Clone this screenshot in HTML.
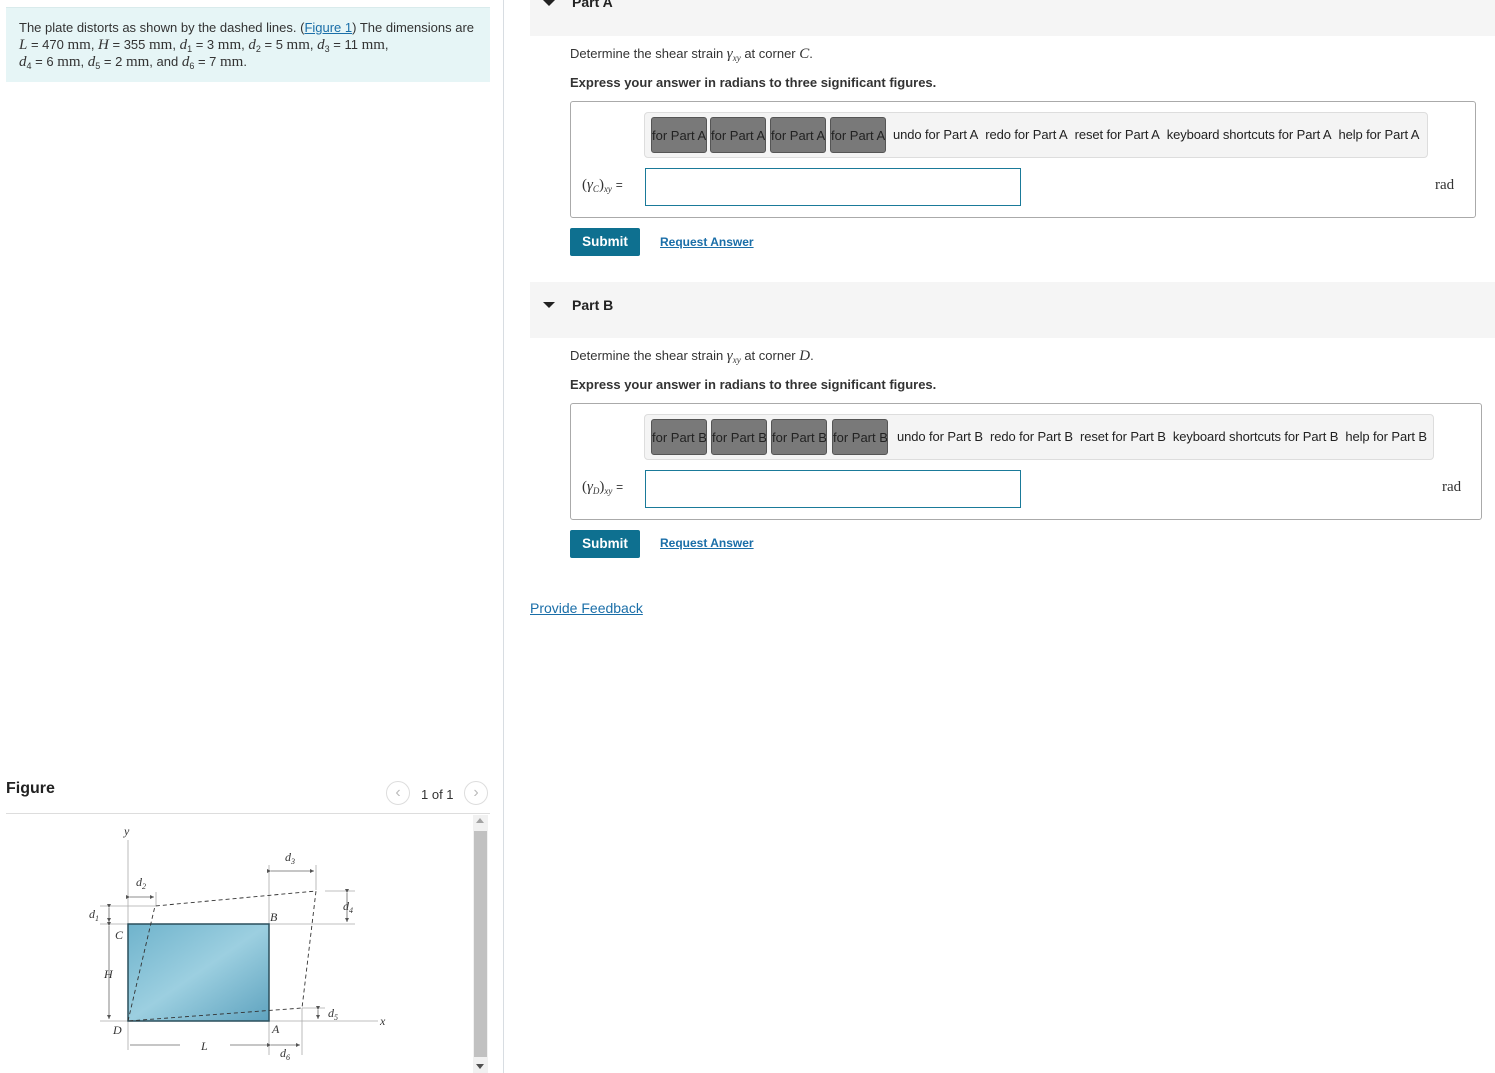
<!DOCTYPE html>
<html><head><meta charset="utf-8"><style>
*{margin:0;padding:0;box-sizing:border-box}
body{width:1495px;height:1073px;position:relative;background:#fff;font-family:"Liberation Sans",Arial,sans-serif;color:#333;overflow:hidden;font-size:13px}
.a{position:absolute}
.m{font-family:"Liberation Serif",serif;font-style:italic}
.mr{font-family:"Liberation Serif",serif}
.s{font-size:9px;position:relative;top:3px;line-height:0}
.btn{position:absolute;width:56px;height:36px;background:#797979;border:1px solid #555;border-radius:3px;color:#222;font-size:13px;overflow:hidden;white-space:nowrap}
.btn span{position:absolute;left:0;top:10px}
.tb{position:absolute;background:#f4f4f4;border:1px solid #ddd;border-radius:4px}
.lbl{position:absolute;font-size:13px;color:#222;white-space:nowrap;letter-spacing:-0.1px}
.sub{position:absolute;width:70px;height:28px;background:#0e7090;color:#fff;font-weight:bold;font-size:13.5px;text-align:center;line-height:28px;border-radius:2px}
.req{position:absolute;color:#1a6ea8;text-decoration:underline;font-size:12px;font-weight:bold}
.ln{white-space:nowrap;height:17px;line-height:17px}
</style></head><body>
<div class="a" style="left:503px;top:0;width:1px;height:1073px;background:#d8dde2"></div>
<div class="a" style="left:6px;top:7px;width:484px;height:75px;background:#e6f5f6;border-top:1px solid #d9ebec"></div>
<div class="a" style="left:19px;top:19px;font-size:13px;color:#333">
<div class="ln">The plate distorts as shown by the dashed lines. (<span style="color:#1a6ea8;text-decoration:underline">Figure 1</span>) The dimensions are</div>
<div class="ln"><span class="m" style="font-size:15px">L</span> = 470 <span class="mr" style="font-size:15px">mm</span>, <span class="m" style="font-size:15px">H</span> = 355 <span class="mr" style="font-size:15px">mm</span>, <span class="m" style="font-size:15px">d</span><span class="s">1</span> = 3 <span class="mr" style="font-size:15px">mm</span>, <span class="m" style="font-size:15px">d</span><span class="s">2</span> = 5 <span class="mr" style="font-size:15px">mm</span>, <span class="m" style="font-size:15px">d</span><span class="s">3</span> = 11 <span class="mr" style="font-size:15px">mm</span>,</div>
<div class="ln"><span class="m" style="font-size:15px">d</span><span class="s">4</span> = 6 <span class="mr" style="font-size:15px">mm</span>, <span class="m" style="font-size:15px">d</span><span class="s">5</span> = 2 <span class="mr" style="font-size:15px">mm</span>, and <span class="m" style="font-size:15px">d</span><span class="s">6</span> = 7 <span class="mr" style="font-size:15px">mm</span>.</div>
</div>

<div class="a" style="left:6px;top:780px;font-weight:bold;font-size:16px;color:#222">Figure</div>
<div class="a" style="left:386px;top:781px;width:24px;height:24px;border:1px solid #ddd;border-radius:12px;color:#bbb;text-align:center;line-height:22px;font-size:16px">&lsaquo;</div>
<div class="a" style="left:421px;top:787px;font-size:13px">1 of 1</div>
<div class="a" style="left:464px;top:781px;width:24px;height:24px;border:1px solid #ddd;border-radius:12px;color:#bbb;text-align:center;line-height:22px;font-size:16px">&rsaquo;</div>
<div class="a" style="left:6px;top:813px;width:484px;height:1px;background:#ddd"></div>
<div class="a" style="left:473px;top:815px;width:15px;height:258px;background:#f1f1f1"></div>
<div class="a" style="left:474px;top:831px;width:13px;height:226px;background:#c1c1c1"></div>
<div class="a" style="left:476px;top:818px;width:0;height:0;border-left:4px solid transparent;border-right:4px solid transparent;border-bottom:5px solid #a3a3a3"></div>
<div class="a" style="left:476px;top:1064px;width:0;height:0;border-left:4px solid transparent;border-right:4px solid transparent;border-top:5px solid #505050"></div>

<svg class="a" style="left:0;top:815px" width="470" height="258" viewBox="0 815 470 258">
<defs><linearGradient id="g" x1="0" y1="0" x2="1" y2="1"><stop offset="0" stop-color="#6fb3cc"/><stop offset=".5" stop-color="#9ccfe0"/><stop offset="1" stop-color="#5fa3bf"/></linearGradient>
<marker id="ar" markerWidth="5" markerHeight="5" refX="5" refY="2.5" orient="auto"><path d="M0,0 L5,2.5 L0,5z" fill="#555"/></marker></defs>
<g stroke="#aaa" stroke-width="0.8" fill="none">
<line x1="128" y1="840" x2="128" y2="1050"/>
<line x1="100" y1="1021" x2="378" y2="1021"/>
<line x1="100" y1="924" x2="128" y2="924"/><line x1="100" y1="906" x2="156" y2="906"/>
<line x1="269" y1="865" x2="269" y2="924"/><line x1="316" y1="865" x2="316" y2="890"/>
<line x1="269" y1="924" x2="355" y2="924"/><line x1="325" y1="891" x2="355" y2="891"/>
<line x1="302" y1="1008" x2="325" y2="1008"/>
<line x1="269" y1="1021" x2="269" y2="1055"/><line x1="302" y1="1008" x2="302" y2="1055"/>
<line x1="156" y1="892" x2="156" y2="906"/>
</g>
<g stroke="#666" stroke-width="0.8" marker-end="url(#ar)" marker-start="url(#ar)">
<line x1="130" y1="897" x2="154" y2="897"/><line x1="271" y1="871" x2="314" y2="871"/>
<line x1="347" y1="893" x2="347" y2="922"/><line x1="109" y1="908" x2="109" y2="922"/>
<line x1="109" y1="926" x2="109" y2="1019"/><line x1="318" y1="1010" x2="318" y2="1019"/>
<line x1="271" y1="1045" x2="300" y2="1045"/>
</g>
<g stroke="#666" stroke-width="0.8">
<line x1="130" y1="1045" x2="180" y2="1045"/><line x1="230" y1="1045" x2="267" y2="1045"/>
</g>
<rect x="128" y="924" width="141" height="97" fill="url(#g)" stroke="#2a4f5c" stroke-width="1.5"/>
<g stroke="#333" stroke-width="0.9" stroke-dasharray="4,3" fill="none">
<polyline points="128,1021 155,906 316,891 302,1008 128,1021"/>
</g>
<g font-family="Liberation Serif,serif" font-style="italic" font-size="12" fill="#333">
<text x="124" y="835">y</text><text x="136" y="886">d<tspan font-size="8" dy="3">2</tspan></text>
<text x="285" y="861">d<tspan font-size="8" dy="3">3</tspan></text><text x="343" y="910">d<tspan font-size="8" dy="3">4</tspan></text>
<text x="89" y="918">d<tspan font-size="8" dy="3">1</tspan></text><text x="270" y="921">B</text>
<text x="115" y="939">C</text><text x="104" y="978">H</text>
<text x="328" y="1017">d<tspan font-size="8" dy="3">5</tspan></text><text x="380" y="1025">x</text>
<text x="113" y="1034">D</text><text x="272" y="1033">A</text>
<text x="201" y="1050">L</text><text x="280" y="1057">d<tspan font-size="8" dy="3">6</tspan></text>
</g>
</svg>

<!-- Part A -->
<div class="a" style="left:530px;top:0;width:965px;height:36px;background:#f5f5f5"></div>
<div class="a" style="left:543px;top:0;width:0;height:0;border-left:6px solid transparent;border-right:6px solid transparent;border-top:6px solid #222"></div>
<div class="a" style="left:572px;top:-6px;font-weight:bold;font-size:14px;color:#222">Part A</div>
<div class="a" style="left:570px;top:46px;font-size:13px">Determine the shear strain <span class="m" style="font-size:15px">γ</span><span class="s m">xy</span> at corner <span class="m" style="font-size:15px">C</span>.</div>
<div class="a" style="left:570px;top:75px;font-size:13px;font-weight:bold">Express your answer in radians to three significant figures.</div>
<div class="a" style="left:570px;top:101px;width:906px;height:117px;border:1px solid #aaa;border-radius:3px"></div>
<div class="tb" style="left:644px;top:112px;width:784px;height:46px"></div>
<div class="btn" style="left:651px;top:117px"><span>for Part A</span></div>
<div class="btn" style="left:710px;top:117px"><span>for Part A</span></div>
<div class="btn" style="left:770px;top:117px"><span>for Part A</span></div>
<div class="btn" style="left:830px;top:117px"><span>for Part A</span></div>
<div class="lbl" style="left:893px;top:127px">undo for Part A&nbsp; redo for Part A&nbsp; reset for Part A&nbsp; keyboard shortcuts for Part A&nbsp; help for Part A</div>
<div class="a mr" style="left:582px;top:177px;font-size:15px">(<span class="m">γ</span><span class="s m">C</span>)<span class="s m">xy</span> <span style="font-family:Liberation Sans;font-size:12px">=</span></div>
<div class="a" style="left:645px;top:168px;width:376px;height:38px;border:1px solid #1a7a99"></div>
<div class="a mr" style="left:1435px;top:177px;font-size:15px">rad</div>
<div class="sub" style="left:570px;top:228px">Submit</div>
<div class="req" style="left:660px;top:235px">Request Answer</div>

<!-- Part B -->
<div class="a" style="left:530px;top:282px;width:965px;height:56px;background:#f5f5f5"></div>
<div class="a" style="left:543px;top:302px;width:0;height:0;border-left:6px solid transparent;border-right:6px solid transparent;border-top:6px solid #222"></div>
<div class="a" style="left:572px;top:297px;font-weight:bold;font-size:14px;color:#222">Part B</div>
<div class="a" style="left:570px;top:348px;font-size:13px">Determine the shear strain <span class="m" style="font-size:15px">γ</span><span class="s m">xy</span> at corner <span class="m" style="font-size:15px">D</span>.</div>
<div class="a" style="left:570px;top:377px;font-size:13px;font-weight:bold">Express your answer in radians to three significant figures.</div>
<div class="a" style="left:570px;top:403px;width:912px;height:117px;border:1px solid #aaa;border-radius:3px"></div>
<div class="tb" style="left:644px;top:414px;width:790px;height:46px"></div>
<div class="btn" style="left:651px;top:419px"><span>for Part B</span></div>
<div class="btn" style="left:711px;top:419px"><span>for Part B</span></div>
<div class="btn" style="left:771px;top:419px"><span>for Part B</span></div>
<div class="btn" style="left:832px;top:419px"><span>for Part B</span></div>
<div class="lbl" style="left:897px;top:429px">undo for Part B&nbsp; redo for Part B&nbsp; reset for Part B&nbsp; keyboard shortcuts for Part B&nbsp; help for Part B</div>
<div class="a mr" style="left:582px;top:479px;font-size:15px">(<span class="m">γ</span><span class="s m">D</span>)<span class="s m">xy</span> <span style="font-family:Liberation Sans;font-size:12px">=</span></div>
<div class="a" style="left:645px;top:470px;width:376px;height:38px;border:1px solid #1a7a99"></div>
<div class="a mr" style="left:1442px;top:479px;font-size:15px">rad</div>
<div class="sub" style="left:570px;top:530px">Submit</div>
<div class="req" style="left:660px;top:536px">Request Answer</div>

<div class="a" style="left:530px;top:600px;font-size:14px;color:#1a6ea8;text-decoration:underline">Provide Feedback</div>
</body></html>
